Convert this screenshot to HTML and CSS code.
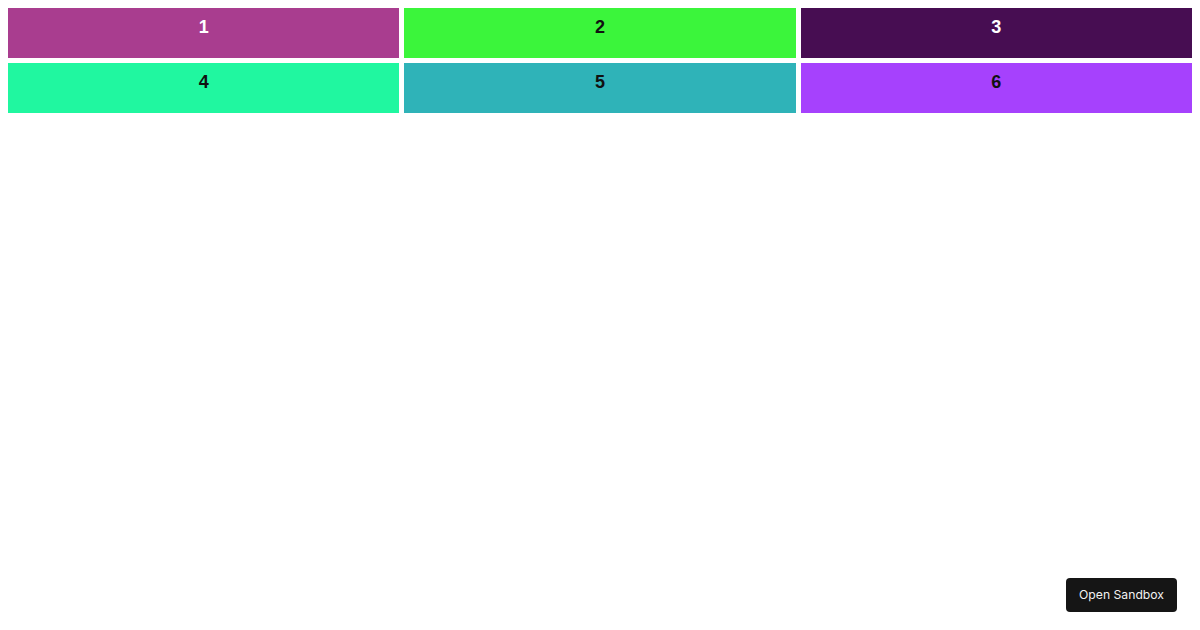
FILE: index.html
```html
<!DOCTYPE html>
<html>
<head>
<meta charset="utf-8">
<link rel="stylesheet" href="styles.css">
</head>
<body>
<div class="grid">
  <div class="cell c1">1</div>
  <div class="cell c2">2</div>
  <div class="cell c3">3</div>
  <div class="cell c4">4</div>
  <div class="cell c5">5</div>
  <div class="cell c6">6</div>
</div>
<a class="sandbox" href="#">Open Sandbox</a>
</body>
</html>
```
FILE: styles.css
```css
html, body { background: #fff; }
body { margin: 8px; font-family: "Liberation Sans", Arial, sans-serif; }
.grid {
  display: grid;
  grid-template-columns: repeat(3, 1fr);
  gap: 5px;
}
.cell {
  height: 50px;
  box-sizing: border-box;
  padding-top: 9px;
  text-align: center;
  font-size: 18px;
  font-weight: bold;
  color: #111;
}
.c1 { background: #a93d8f; color: #fff; }
.c2 { background: #3bf53b; }
.c3 { background: #470d52; color: #fff; }
.c4 { background: #20f7a0; }
.c5 { background: #2fb3b8; }
.c6 { background: #a641fd; }
.sandbox {
  position: fixed;
  right: 23px;
  bottom: 18px;
  width: 111px;
  height: 34px;
  box-sizing: border-box;
  display: flex;
  align-items: center;
  justify-content: center;
  padding-bottom: 1px;
  background: #151515;
  color: #f2f2f2;
  border-radius: 4px;
  font-family: Inter, "Liberation Sans", sans-serif;
  font-size: 12.2px;
  text-decoration: none;
}
```
